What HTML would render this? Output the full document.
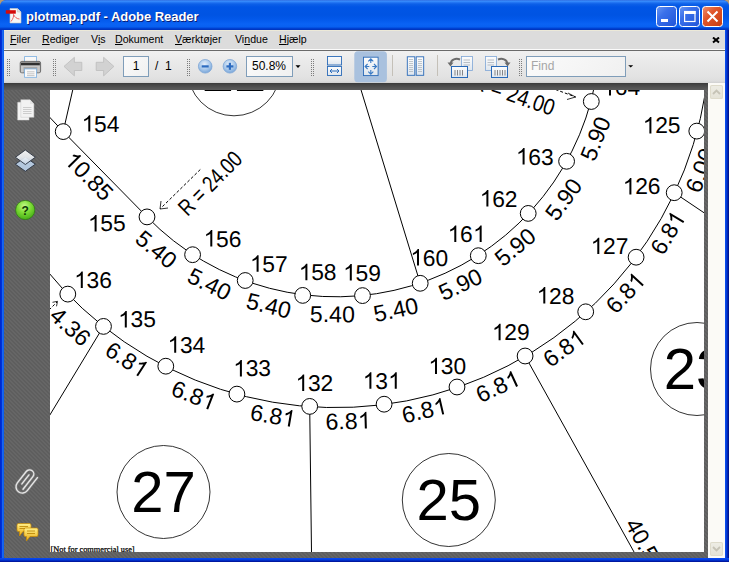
<!DOCTYPE html>
<html><head><meta charset="utf-8">
<style>
html,body{margin:0;padding:0;}
body{width:729px;height:562px;overflow:hidden;position:relative;background:#0a4fd8;font-family:"Liberation Sans",sans-serif;}
.abs{position:absolute;}
#title{left:0;top:0;width:729px;height:30px;border-radius:6px 6px 0 0;
 background:linear-gradient(#2a5fd8 0px,#3d94ff 1px,#2a7cf6 2px,#0d60e8 4px,#0055e5 7px,#0054e3 15px,#0258ea 19px,#0a63f4 24px,#0860f0 27px,#0046d8 28px,#0030b8 30px);}
#corner{left:0;top:0;width:729px;height:8px;}
#ttxt{left:26px;top:10px;color:#fff;font-weight:bold;font-size:13px;letter-spacing:-0.04px;text-shadow:1px 1px 0 #0a1e78;white-space:nowrap;line-height:14px;}
#lb{left:0;top:30px;width:4px;height:532px;background:linear-gradient(90deg,#0026c8 0px,#0030d8 1.5px,#1a66f0 2.5px,#1060ee 3.5px,#3a5aa8 4px);}
#rb{left:725px;top:30px;width:4px;height:532px;background:linear-gradient(90deg,#0850f0 0px,#0846e6 1px,#0030c8 2px,#001490 3.5px,#001080 4px);}
#bb{left:0;top:558px;width:729px;height:4px;background:linear-gradient(#0848f0 0px,#0846ea 1px,#0038d8 2px,#0018a0 3.5px,#001490 4px);}
#menu{left:4px;top:30px;width:721px;height:20px;background:#dcdcdc;border-top:1px solid #ece9d8;border-bottom:1px solid #fbfbfb;box-sizing:border-box;}
#menu span{position:absolute;top:2px;font-size:10.6px;color:#000;line-height:13px;white-space:nowrap;}
#menu u{text-decoration:underline;text-underline-offset:1px;}
#tb{left:4px;top:50px;width:721px;height:33px;box-sizing:border-box;border-top:1px solid #6a6a6a;
 background:linear-gradient(#f0f0f0 0px,#eeeeee 4px,#e8e8e8 14px,#e2e2e2 26px,#dedede 30px,#d0d0d0 32px);}
.grip{position:absolute;width:4px;height:18px;background-image:radial-gradient(circle,#8c8c8c 0.7px,transparent 0.9px);background-size:2px 2px;}
.field{position:absolute;border:1px solid #7f9db9;background:linear-gradient(135deg,#fbfbfb,#f0f0f0);box-sizing:border-box;font-size:12px;line-height:18px;white-space:nowrap;}
#shadow{left:4px;top:83px;width:704px;height:7px;background:linear-gradient(#3a3a3a,#464646 2px,#545454 5px,#5c5c5c 7px);}
#nav{left:4px;top:90px;width:46px;height:468px;background:repeating-linear-gradient(45deg,#5e5e5e 0px,#5e5e5e 1.41px,#666666 1.41px,#666666 2.83px);}
#pgarea{left:50px;top:90px;width:658px;height:468px;background:repeating-linear-gradient(45deg,#5e5e5e 0px,#5e5e5e 1.41px,#666666 1.41px,#666666 2.83px);}
#page{left:50px;top:90px;width:654px;height:462px;background:#fff;overflow:hidden;}
#sb{left:708px;top:83px;width:17px;height:475px;background:#fbfaf6;}
.sbtn{position:absolute;left:2px;width:13px;height:14px;border-radius:2px;background:linear-gradient(#eeede5,#e4e2d6);box-shadow:inset 0 0 0 1px #dedbcb;}
</style></head><body>
<div id="title" class="abs"></div>
<svg class="abs" style="left:0;top:0" width="729" height="30">
 <path d="M0,0 H5 Q1,1 0,5 Z" fill="#b89a70"/>
 <path d="M729,0 H724 Q728,1 729,5 Z" fill="#b89a70"/>
 <!-- pdf icon -->
 <path d="M10,8.5 H17.5 L21,12 V23 H10 Z" fill="#f6f6f6" stroke="#c8c8c8" stroke-width="0.6"/>
 <path d="M17.5,8.5 V12 H21" fill="#e0e0e0" stroke="#b8b8b8" stroke-width="0.5"/>
 <rect x="5.8" y="10.2" width="10" height="3.5" fill="#d40a0a"/>
 <path d="M11,21.5 C13,19 14,16 13.5,14.5 C14.5,17 17,19 19.5,19" fill="none" stroke="#e84040" stroke-width="0.8"/>
 <!-- buttons -->
 <defs>
  <linearGradient id="bbg" x1="0" y1="0" x2="1" y2="1"><stop offset="0" stop-color="#6a98f4"/><stop offset="0.35" stop-color="#3a70ea"/><stop offset="1" stop-color="#2054d8"/></linearGradient>
  <linearGradient id="cbg" x1="0" y1="0" x2="1" y2="1"><stop offset="0" stop-color="#f09070"/><stop offset="0.4" stop-color="#e0552a"/><stop offset="1" stop-color="#c83c10"/></linearGradient>
 </defs>
 <g>
  <rect x="656.5" y="6.5" width="20" height="20" rx="3" fill="url(#bbg)" stroke="#fff" stroke-width="1"/>
  <rect x="661" y="19" width="7" height="3" fill="#fff"/>
  <rect x="679.5" y="6.5" width="20" height="20" rx="3" fill="url(#bbg)" stroke="#fff" stroke-width="1"/>
  <rect x="684.6" y="11.5" width="10.4" height="10" fill="none" stroke="#fff" stroke-width="1.2"/>
  <rect x="684" y="11" width="11.6" height="3" fill="#fff"/>
  <rect x="702.5" y="6.5" width="20" height="20" rx="3" fill="url(#cbg)" stroke="#fff" stroke-width="1"/>
  <path d="M707.5,11.5 L717.5,21.5 M717.5,11.5 L707.5,21.5" stroke="#fff" stroke-width="2"/>
 </g>
</svg>
<div id="ttxt" class="abs">plotmap.pdf - Adobe Reader</div>
<div id="lb" class="abs"></div><div id="rb" class="abs"></div><div id="bb" class="abs"></div>
<div id="menu" class="abs">
 <span style="left:6px"><u>F</u>iler</span>
 <span style="left:38px"><u>R</u>ediger</span>
 <span style="left:87px">V<u>i</u>s</span>
 <span style="left:111px"><u>D</u>okument</span>
 <span style="left:171px"><u>V</u>ærktøjer</span>
 <span style="left:231px">Vi<u>n</u>due</span>
 <span style="left:275px"><u>H</u>jælp</span>
 <svg style="position:absolute;left:708px;top:6px" width="8" height="7"><path d="M1,0.5 L7,5.5 M7,0.5 L1,5.5" stroke="#000" stroke-width="2"/></svg>
</div>
<div id="tb" class="abs">
 <div class="field" style="left:119px;top:5px;width:26px;height:21px;text-align:center;">1</div>
 <div style="position:absolute;left:151px;top:6px;font-size:12px;line-height:18px;">/ &nbsp;1</div>
 <div class="field" style="left:242px;top:5px;width:47px;height:21px;padding-left:5px;">50.8%</div>
 <div class="field" style="left:522px;top:5px;width:100px;height:21px;padding-left:4px;color:#a6a6a6;">Find</div>
 <svg style="position:absolute;left:0;top:-1px" width="721" height="33">
  <!-- printer -->
  <rect x="20.6" y="6.6" width="12" height="6.5" fill="#f8f8f8" stroke="#7aaee0" stroke-width="0.8"/>
  <rect x="16.2" y="11.4" width="20.4" height="11.4" rx="1.6" fill="#a8a8a8" stroke="#555" stroke-width="0.8"/>
  <rect x="17" y="12.8" width="18.8" height="2.6" fill="#303030"/>
  <rect x="17" y="15.6" width="18.8" height="1.2" fill="#d0d0d0"/>
  <rect x="17" y="16.8" width="2.5" height="5.5" fill="#c8c8c8"/>
  <rect x="33.3" y="16.8" width="2.5" height="5.5" fill="#c8c8c8"/>
  <rect x="20.6" y="18.9" width="12" height="8.4" fill="#fafafa" stroke="#7aaee0" stroke-width="0.8"/>
  <path d="M23,21.8 H30.5 M23,23.8 H30.5 M23,25.6 H30.5" stroke="#a0a0a0" stroke-width="0.6"/>
  <!-- back/forward -->
  <path d="M60,16.4 L70.4,7.3 V12.3 H77.8 V20.5 H70.4 V25.9 Z" fill="#d2d2d2" stroke="#bdbdbd" stroke-width="0.8"/>
  <path d="M109.9,16.4 L99.6,7.3 V12.3 H92.2 V20.5 H99.6 V25.9 Z" fill="#d2d2d2" stroke="#bdbdbd" stroke-width="0.8"/>
  <!-- zoom out/in -->
  <defs>
   <radialGradient id="zg" cx="0.45" cy="0.35" r="0.7"><stop offset="0" stop-color="#e6f0fb"/><stop offset="0.55" stop-color="#a9c8ea"/><stop offset="1" stop-color="#6f9fd6"/></radialGradient>
   <linearGradient id="pg" x1="0" y1="0" x2="0" y2="1"><stop offset="0" stop-color="#fdfdfd"/><stop offset="1" stop-color="#dfe6ee"/></linearGradient>
  </defs>
  <circle cx="201.2" cy="16.3" r="6.8" fill="url(#zg)" stroke="#7ea6d6" stroke-width="0.8"/>
  <rect x="197.7" y="15.3" width="7" height="2.2" fill="#2d6cc0"/>
  <circle cx="225.9" cy="16.3" r="6.8" fill="url(#zg)" stroke="#7ea6d6" stroke-width="0.8"/>
  <rect x="222.4" y="15.3" width="7" height="2.2" fill="#2d6cc0"/>
  <rect x="224.8" y="12.8" width="2.2" height="7" fill="#2d6cc0"/>
  <path d="M291.5,15.3 H296.5 L294,18 Z" fill="#000"/>
  <path d="M624.2,15.3 H629.2 L626.7,17.6 Z" fill="#000"/>
  <!-- fit width -->
  <rect x="323.5" y="6.5" width="14" height="8.5" fill="url(#pg)" stroke="#2a6ab8" stroke-width="0.9"/>
  <rect x="323.5" y="16.5" width="14" height="9" fill="url(#pg)" stroke="#2a6ab8" stroke-width="0.9"/>
  <path d="M326,21 H335 M326,21 L328,19 M326,21 L328,23 M335,21 L333,19 M335,21 L333,23" stroke="#2a6ab8" stroke-width="1" fill="none"/>
  <!-- fit page selected -->
  <rect x="350.3" y="1.3" width="32.6" height="31" rx="3.5" fill="#a9c1de"/>
  <rect x="359.5" y="7.2" width="14.6" height="18.4" fill="url(#pg)" stroke="#2a6ab8" stroke-width="0.9"/>
  <path d="M366.8,9 V13 M364.3,11.3 L366.8,8.8 L369.3,11.3 M366.8,20 V24 M364.3,21.7 L366.8,24.2 L369.3,21.7 M361.3,16.5 H365.3 M363.6,14 L361.1,16.5 L363.6,19 M368.3,16.5 H372.3 M370,14 L372.5,16.5 L370,19" stroke="#3a7ac4" stroke-width="1.1" fill="none"/>
  <!-- separators -->
  <rect x="388" y="5" width="1" height="21" fill="#c4c0b8"/>
  <rect x="433" y="5" width="1" height="21" fill="#c4c0b8"/>
  <!-- two page -->
  <rect x="403.3" y="6.8" width="7.5" height="18.5" fill="url(#pg)" stroke="#2a6ab8" stroke-width="0.9"/>
  <rect x="412.2" y="6.8" width="7.5" height="18.5" fill="url(#pg)" stroke="#2a6ab8" stroke-width="0.9"/>
  <path d="M405,9.5 H409 M405,11.5 H409 M405,13.5 H409 M405,15.5 H409 M405,17.5 H409 M405,19.5 H409 M405,21.5 H409 M414,9.5 H418 M414,11.5 H418 M414,13.5 H418 M414,15.5 H418 M414,17.5 H418 M414,19.5 H418 M414,21.5 H418" stroke="#a8b0b8" stroke-width="0.7"/>
  <!-- rotate ccw -->
  <rect x="457.5" y="6.5" width="11" height="14" fill="url(#pg)" stroke="#7ea6d6" stroke-width="0.8"/>
  <path d="M459.5,10 H466 M459.5,12.5 H466 M459.5,15 H466" stroke="#a0a8b0" stroke-width="0.7"/>
  <path d="M456,9.5 C452,8 447,9 446.5,14" fill="none" stroke="#6c6c6c" stroke-width="2"/>
  <path d="M443.5,12.5 L449.5,12.5 L446.5,16.5 Z" fill="#6c6c6c"/>
  <rect x="447.5" y="16.5" width="16" height="11" fill="url(#pg)" stroke="#2a6ab8" stroke-width="1"/>
  <path d="M451,20 V25.5 M453.5,20 V25.5 M456,20 V25.5 M458.5,20 V25.5" stroke="#6a6a6a" stroke-width="0.8"/>
  <!-- rotate cw -->
  <rect x="481.5" y="6.5" width="11" height="14" fill="url(#pg)" stroke="#7ea6d6" stroke-width="0.8"/>
  <path d="M483.5,10 H490 M483.5,12.5 H490 M483.5,15 H490" stroke="#a0a8b0" stroke-width="0.7"/>
  <path d="M494,9.5 C498,8 503,9 503.5,14" fill="none" stroke="#6c6c6c" stroke-width="2"/>
  <path d="M500.5,12.5 L506.5,12.5 L503.5,16.5 Z" fill="#6c6c6c"/>
  <rect x="487.5" y="16.5" width="16" height="11" fill="url(#pg)" stroke="#2a6ab8" stroke-width="1"/>
  <path d="M491,20 V25.5 M493.5,20 V25.5 M496,20 V25.5 M498.5,20 V25.5 M501,20 V25.5" stroke="#6a6a6a" stroke-width="0.8"/>
 </svg>
</div>
<svg class="abs" style="left:0;top:0" width="729" height="90"><rect x="7" y="59" width="1" height="1" fill="#7c7c7c"/><rect x="7" y="61" width="1" height="1" fill="#7c7c7c"/><rect x="7" y="63" width="1" height="1" fill="#7c7c7c"/><rect x="7" y="65" width="1" height="1" fill="#7c7c7c"/><rect x="7" y="67" width="1" height="1" fill="#7c7c7c"/><rect x="7" y="69" width="1" height="1" fill="#7c7c7c"/><rect x="7" y="71" width="1" height="1" fill="#7c7c7c"/><rect x="7" y="73" width="1" height="1" fill="#7c7c7c"/><rect x="7" y="75" width="1" height="1" fill="#7c7c7c"/><rect x="9" y="59" width="1" height="1" fill="#7c7c7c"/><rect x="9" y="61" width="1" height="1" fill="#7c7c7c"/><rect x="9" y="63" width="1" height="1" fill="#7c7c7c"/><rect x="9" y="65" width="1" height="1" fill="#7c7c7c"/><rect x="9" y="67" width="1" height="1" fill="#7c7c7c"/><rect x="9" y="69" width="1" height="1" fill="#7c7c7c"/><rect x="9" y="71" width="1" height="1" fill="#7c7c7c"/><rect x="9" y="73" width="1" height="1" fill="#7c7c7c"/><rect x="9" y="75" width="1" height="1" fill="#7c7c7c"/><rect x="53" y="59" width="1" height="1" fill="#7c7c7c"/><rect x="53" y="61" width="1" height="1" fill="#7c7c7c"/><rect x="53" y="63" width="1" height="1" fill="#7c7c7c"/><rect x="53" y="65" width="1" height="1" fill="#7c7c7c"/><rect x="53" y="67" width="1" height="1" fill="#7c7c7c"/><rect x="53" y="69" width="1" height="1" fill="#7c7c7c"/><rect x="53" y="71" width="1" height="1" fill="#7c7c7c"/><rect x="53" y="73" width="1" height="1" fill="#7c7c7c"/><rect x="53" y="75" width="1" height="1" fill="#7c7c7c"/><rect x="55" y="59" width="1" height="1" fill="#7c7c7c"/><rect x="55" y="61" width="1" height="1" fill="#7c7c7c"/><rect x="55" y="63" width="1" height="1" fill="#7c7c7c"/><rect x="55" y="65" width="1" height="1" fill="#7c7c7c"/><rect x="55" y="67" width="1" height="1" fill="#7c7c7c"/><rect x="55" y="69" width="1" height="1" fill="#7c7c7c"/><rect x="55" y="71" width="1" height="1" fill="#7c7c7c"/><rect x="55" y="73" width="1" height="1" fill="#7c7c7c"/><rect x="55" y="75" width="1" height="1" fill="#7c7c7c"/><rect x="187" y="59" width="1" height="1" fill="#7c7c7c"/><rect x="187" y="61" width="1" height="1" fill="#7c7c7c"/><rect x="187" y="63" width="1" height="1" fill="#7c7c7c"/><rect x="187" y="65" width="1" height="1" fill="#7c7c7c"/><rect x="187" y="67" width="1" height="1" fill="#7c7c7c"/><rect x="187" y="69" width="1" height="1" fill="#7c7c7c"/><rect x="187" y="71" width="1" height="1" fill="#7c7c7c"/><rect x="187" y="73" width="1" height="1" fill="#7c7c7c"/><rect x="187" y="75" width="1" height="1" fill="#7c7c7c"/><rect x="189" y="59" width="1" height="1" fill="#7c7c7c"/><rect x="189" y="61" width="1" height="1" fill="#7c7c7c"/><rect x="189" y="63" width="1" height="1" fill="#7c7c7c"/><rect x="189" y="65" width="1" height="1" fill="#7c7c7c"/><rect x="189" y="67" width="1" height="1" fill="#7c7c7c"/><rect x="189" y="69" width="1" height="1" fill="#7c7c7c"/><rect x="189" y="71" width="1" height="1" fill="#7c7c7c"/><rect x="189" y="73" width="1" height="1" fill="#7c7c7c"/><rect x="189" y="75" width="1" height="1" fill="#7c7c7c"/><rect x="311" y="59" width="1" height="1" fill="#7c7c7c"/><rect x="311" y="61" width="1" height="1" fill="#7c7c7c"/><rect x="311" y="63" width="1" height="1" fill="#7c7c7c"/><rect x="311" y="65" width="1" height="1" fill="#7c7c7c"/><rect x="311" y="67" width="1" height="1" fill="#7c7c7c"/><rect x="311" y="69" width="1" height="1" fill="#7c7c7c"/><rect x="311" y="71" width="1" height="1" fill="#7c7c7c"/><rect x="311" y="73" width="1" height="1" fill="#7c7c7c"/><rect x="311" y="75" width="1" height="1" fill="#7c7c7c"/><rect x="313" y="59" width="1" height="1" fill="#7c7c7c"/><rect x="313" y="61" width="1" height="1" fill="#7c7c7c"/><rect x="313" y="63" width="1" height="1" fill="#7c7c7c"/><rect x="313" y="65" width="1" height="1" fill="#7c7c7c"/><rect x="313" y="67" width="1" height="1" fill="#7c7c7c"/><rect x="313" y="69" width="1" height="1" fill="#7c7c7c"/><rect x="313" y="71" width="1" height="1" fill="#7c7c7c"/><rect x="313" y="73" width="1" height="1" fill="#7c7c7c"/><rect x="313" y="75" width="1" height="1" fill="#7c7c7c"/><rect x="519" y="59" width="1" height="1" fill="#7c7c7c"/><rect x="519" y="61" width="1" height="1" fill="#7c7c7c"/><rect x="519" y="63" width="1" height="1" fill="#7c7c7c"/><rect x="519" y="65" width="1" height="1" fill="#7c7c7c"/><rect x="519" y="67" width="1" height="1" fill="#7c7c7c"/><rect x="519" y="69" width="1" height="1" fill="#7c7c7c"/><rect x="519" y="71" width="1" height="1" fill="#7c7c7c"/><rect x="519" y="73" width="1" height="1" fill="#7c7c7c"/><rect x="519" y="75" width="1" height="1" fill="#7c7c7c"/><rect x="521" y="59" width="1" height="1" fill="#7c7c7c"/><rect x="521" y="61" width="1" height="1" fill="#7c7c7c"/><rect x="521" y="63" width="1" height="1" fill="#7c7c7c"/><rect x="521" y="65" width="1" height="1" fill="#7c7c7c"/><rect x="521" y="67" width="1" height="1" fill="#7c7c7c"/><rect x="521" y="69" width="1" height="1" fill="#7c7c7c"/><rect x="521" y="71" width="1" height="1" fill="#7c7c7c"/><rect x="521" y="73" width="1" height="1" fill="#7c7c7c"/><rect x="521" y="75" width="1" height="1" fill="#7c7c7c"/></svg>
<div id="shadow" class="abs"></div>
<div id="nav" class="abs"></div>
<div id="pgarea" class="abs"></div>
<div id="page" class="abs"></div>
<svg class="abs" style="left:0;top:0" width="729" height="562" font-family="Liberation Sans" text-rendering="geometricPrecision">
 <defs><clipPath id="pc"><rect x="50" y="90" width="654" height="462"/></clipPath></defs>
 <g clip-path="url(#pc)">
<path d="M146.98,216.92 A263.8,263.8 0 0 0 595.05,83.34" fill="none" stroke="#000" stroke-width="1"/>
<path d="M45.45,268.97 A374.0,374.0 0 0 0 705.50,92.11" fill="none" stroke="#000" stroke-width="1"/>
<line x1="75.00" y1="80.00" x2="63.20" y2="131.60" stroke="#000" stroke-width="1.0" />
<line x1="40.00" y1="107.00" x2="63.20" y2="131.60" stroke="#000" stroke-width="1.0" />
<line x1="63.20" y1="131.60" x2="147.00" y2="216.90" stroke="#000" stroke-width="1.0" />
<line x1="358.00" y1="80.00" x2="420.20" y2="283.30" stroke="#000" stroke-width="1.0" />
<line x1="309.70" y1="406.40" x2="311.60" y2="560.00" stroke="#000" stroke-width="1.0" />
<line x1="525.10" y1="356.00" x2="638.50" y2="560.00" stroke="#000" stroke-width="1.0" />
<line x1="674.20" y1="192.70" x2="720.00" y2="223.50" stroke="#000" stroke-width="1.0" />
<line x1="103.50" y1="326.40" x2="45.00" y2="423.00" stroke="#000" stroke-width="1.0" />
<circle cx="234.0" cy="69.3" r="46.5" fill="none" stroke="#000" stroke-width="0.8"/>
<text x="234.0" y="91.2" text-anchor="middle" font-size="58">22</text>
<circle cx="163.5" cy="492.0" r="46.5" fill="none" stroke="#000" stroke-width="0.8"/>
<text x="163.5" y="511.9" text-anchor="middle" font-size="58">27</text>
<circle cx="448.8" cy="500.0" r="46.5" fill="none" stroke="#000" stroke-width="0.8"/>
<text x="448.8" y="519.9" text-anchor="middle" font-size="58">25</text>
<circle cx="697.0" cy="369.0" r="46.5" fill="none" stroke="#000" stroke-width="0.8"/>
<text x="696.0" y="388.9" text-anchor="middle" font-size="58">23</text>
<circle cx="147.0" cy="216.9" r="7.9" fill="#fff" stroke="#000" stroke-width="1"/>
<circle cx="192.6" cy="254.7" r="7.9" fill="#fff" stroke="#000" stroke-width="1"/>
<circle cx="245.2" cy="280.5" r="7.9" fill="#fff" stroke="#000" stroke-width="1"/>
<circle cx="302.7" cy="295.4" r="7.9" fill="#fff" stroke="#000" stroke-width="1"/>
<circle cx="362.5" cy="295.6" r="7.9" fill="#fff" stroke="#000" stroke-width="1"/>
<circle cx="420.2" cy="283.3" r="7.9" fill="#fff" stroke="#000" stroke-width="1"/>
<circle cx="478.3" cy="255.7" r="7.9" fill="#fff" stroke="#000" stroke-width="1"/>
<circle cx="528.2" cy="213.4" r="7.9" fill="#fff" stroke="#000" stroke-width="1"/>
<circle cx="566.6" cy="161.3" r="7.9" fill="#fff" stroke="#000" stroke-width="1"/>
<circle cx="591.3" cy="101.5" r="7.9" fill="#fff" stroke="#000" stroke-width="1"/>
<circle cx="67.8" cy="294.1" r="7.9" fill="#fff" stroke="#000" stroke-width="1"/>
<circle cx="103.5" cy="326.40000000000003" r="7.9" fill="#fff" stroke="#000" stroke-width="1"/>
<circle cx="165.8" cy="366.20000000000005" r="7.9" fill="#fff" stroke="#000" stroke-width="1"/>
<circle cx="236.9" cy="394.1" r="7.9" fill="#fff" stroke="#000" stroke-width="1"/>
<circle cx="309.7" cy="406.40000000000003" r="7.9" fill="#fff" stroke="#000" stroke-width="1"/>
<circle cx="384.1" cy="404.20000000000005" r="7.9" fill="#fff" stroke="#000" stroke-width="1"/>
<circle cx="457.0" cy="387.0" r="7.9" fill="#fff" stroke="#000" stroke-width="1"/>
<circle cx="525.1" cy="356.0" r="7.9" fill="#fff" stroke="#000" stroke-width="1"/>
<circle cx="585.7" cy="311.8" r="7.9" fill="#fff" stroke="#000" stroke-width="1"/>
<circle cx="636.1" cy="257.20000000000005" r="7.9" fill="#fff" stroke="#000" stroke-width="1"/>
<circle cx="674.2" cy="192.7" r="7.9" fill="#fff" stroke="#000" stroke-width="1"/>
<circle cx="696.8" cy="131.1" r="7.9" fill="#fff" stroke="#000" stroke-width="1"/>
<circle cx="63.2" cy="131.6" r="7.9" fill="#fff" stroke="#000" stroke-width="1"/>
<g transform="translate(81.36,131.60)"><path transform="translate(0.00,0) scale(0.01113,-0.01113)" d="M803,0 L623,0 L623,1147 C580,1106 523,1065 453,1024 C383,983 320,952 254,931 L254,1105 C365,1152 452,1210 528,1278 C604,1346 658,1412 689,1476 L803,1476 Z"/><text x="12.68" y="0" font-size="22.8">54</text></g>
<g transform="translate(87.66,231.40)"><path transform="translate(0.00,0) scale(0.01113,-0.01113)" d="M803,0 L623,0 L623,1147 C580,1106 523,1065 453,1024 C383,983 320,952 254,931 L254,1105 C365,1152 452,1210 528,1278 C604,1346 658,1412 689,1476 L803,1476 Z"/><text x="12.68" y="0" font-size="22.8">55</text></g>
<g transform="translate(203.36,246.50)"><path transform="translate(0.00,0) scale(0.01113,-0.01113)" d="M803,0 L623,0 L623,1147 C580,1106 523,1065 453,1024 C383,983 320,952 254,931 L254,1105 C365,1152 452,1210 528,1278 C604,1346 658,1412 689,1476 L803,1476 Z"/><text x="12.68" y="0" font-size="22.8">56</text></g>
<g transform="translate(249.66,271.70)"><path transform="translate(0.00,0) scale(0.01113,-0.01113)" d="M803,0 L623,0 L623,1147 C580,1106 523,1065 453,1024 C383,983 320,952 254,931 L254,1105 C365,1152 452,1210 528,1278 C604,1346 658,1412 689,1476 L803,1476 Z"/><text x="12.68" y="0" font-size="22.8">57</text></g>
<g transform="translate(298.46,280.30)"><path transform="translate(0.00,0) scale(0.01113,-0.01113)" d="M803,0 L623,0 L623,1147 C580,1106 523,1065 453,1024 C383,983 320,952 254,931 L254,1105 C365,1152 452,1210 528,1278 C604,1346 658,1412 689,1476 L803,1476 Z"/><text x="12.68" y="0" font-size="22.8">58</text></g>
<g transform="translate(342.86,280.50)"><path transform="translate(0.00,0) scale(0.01113,-0.01113)" d="M803,0 L623,0 L623,1147 C580,1106 523,1065 453,1024 C383,983 320,952 254,931 L254,1105 C365,1152 452,1210 528,1278 C604,1346 658,1412 689,1476 L803,1476 Z"/><text x="12.68" y="0" font-size="22.8">59</text></g>
<g transform="translate(410.06,265.50)"><path transform="translate(0.00,0) scale(0.01113,-0.01113)" d="M803,0 L623,0 L623,1147 C580,1106 523,1065 453,1024 C383,983 320,952 254,931 L254,1105 C365,1152 452,1210 528,1278 C604,1346 658,1412 689,1476 L803,1476 Z"/><text x="12.68" y="0" font-size="22.8">60</text></g>
<g transform="translate(447.36,241.90)"><path transform="translate(0.00,0) scale(0.01113,-0.01113)" d="M803,0 L623,0 L623,1147 C580,1106 523,1065 453,1024 C383,983 320,952 254,931 L254,1105 C365,1152 452,1210 528,1278 C604,1346 658,1412 689,1476 L803,1476 Z"/><text x="12.68" y="0" font-size="22.8">6</text><path transform="translate(25.36,0) scale(0.01113,-0.01113)" d="M803,0 L623,0 L623,1147 C580,1106 523,1065 453,1024 C383,983 320,952 254,931 L254,1105 C365,1152 452,1210 528,1278 C604,1346 658,1412 689,1476 L803,1476 Z"/></g>
<g transform="translate(479.46,206.50)"><path transform="translate(0.00,0) scale(0.01113,-0.01113)" d="M803,0 L623,0 L623,1147 C580,1106 523,1065 453,1024 C383,983 320,952 254,931 L254,1105 C365,1152 452,1210 528,1278 C604,1346 658,1412 689,1476 L803,1476 Z"/><text x="12.68" y="0" font-size="22.8">62</text></g>
<g transform="translate(515.66,164.50)"><path transform="translate(0.00,0) scale(0.01113,-0.01113)" d="M803,0 L623,0 L623,1147 C580,1106 523,1065 453,1024 C383,983 320,952 254,931 L254,1105 C365,1152 452,1210 528,1278 C604,1346 658,1412 689,1476 L803,1476 Z"/><text x="12.68" y="0" font-size="22.8">63</text></g>
<g transform="translate(602.06,95.40)"><path transform="translate(0.00,0) scale(0.01113,-0.01113)" d="M803,0 L623,0 L623,1147 C580,1106 523,1065 453,1024 C383,983 320,952 254,931 L254,1105 C365,1152 452,1210 528,1278 C604,1346 658,1412 689,1476 L803,1476 Z"/><text x="12.68" y="0" font-size="22.8">64</text></g>
<g transform="translate(73.86,287.90)"><path transform="translate(0.00,0) scale(0.01113,-0.01113)" d="M803,0 L623,0 L623,1147 C580,1106 523,1065 453,1024 C383,983 320,952 254,931 L254,1105 C365,1152 452,1210 528,1278 C604,1346 658,1412 689,1476 L803,1476 Z"/><text x="12.68" y="0" font-size="22.8">36</text></g>
<g transform="translate(117.86,327.40)"><path transform="translate(0.00,0) scale(0.01113,-0.01113)" d="M803,0 L623,0 L623,1147 C580,1106 523,1065 453,1024 C383,983 320,952 254,931 L254,1105 C365,1152 452,1210 528,1278 C604,1346 658,1412 689,1476 L803,1476 Z"/><text x="12.68" y="0" font-size="22.8">35</text></g>
<g transform="translate(167.26,352.70)"><path transform="translate(0.00,0) scale(0.01113,-0.01113)" d="M803,0 L623,0 L623,1147 C580,1106 523,1065 453,1024 C383,983 320,952 254,931 L254,1105 C365,1152 452,1210 528,1278 C604,1346 658,1412 689,1476 L803,1476 Z"/><text x="12.68" y="0" font-size="22.8">34</text></g>
<g transform="translate(232.96,376.40)"><path transform="translate(0.00,0) scale(0.01113,-0.01113)" d="M803,0 L623,0 L623,1147 C580,1106 523,1065 453,1024 C383,983 320,952 254,931 L254,1105 C365,1152 452,1210 528,1278 C604,1346 658,1412 689,1476 L803,1476 Z"/><text x="12.68" y="0" font-size="22.8">33</text></g>
<g transform="translate(295.26,391.00)"><path transform="translate(0.00,0) scale(0.01113,-0.01113)" d="M803,0 L623,0 L623,1147 C580,1106 523,1065 453,1024 C383,983 320,952 254,931 L254,1105 C365,1152 452,1210 528,1278 C604,1346 658,1412 689,1476 L803,1476 Z"/><text x="12.68" y="0" font-size="22.8">32</text></g>
<g transform="translate(362.46,388.80)"><path transform="translate(0.00,0) scale(0.01113,-0.01113)" d="M803,0 L623,0 L623,1147 C580,1106 523,1065 453,1024 C383,983 320,952 254,931 L254,1105 C365,1152 452,1210 528,1278 C604,1346 658,1412 689,1476 L803,1476 Z"/><text x="12.68" y="0" font-size="22.8">3</text><path transform="translate(25.36,0) scale(0.01113,-0.01113)" d="M803,0 L623,0 L623,1147 C580,1106 523,1065 453,1024 C383,983 320,952 254,931 L254,1105 C365,1152 452,1210 528,1278 C604,1346 658,1412 689,1476 L803,1476 Z"/></g>
<g transform="translate(428.06,374.10)"><path transform="translate(0.00,0) scale(0.01113,-0.01113)" d="M803,0 L623,0 L623,1147 C580,1106 523,1065 453,1024 C383,983 320,952 254,931 L254,1105 C365,1152 452,1210 528,1278 C604,1346 658,1412 689,1476 L803,1476 Z"/><text x="12.68" y="0" font-size="22.8">30</text></g>
<g transform="translate(491.66,340.30)"><path transform="translate(0.00,0) scale(0.01113,-0.01113)" d="M803,0 L623,0 L623,1147 C580,1106 523,1065 453,1024 C383,983 320,952 254,931 L254,1105 C365,1152 452,1210 528,1278 C604,1346 658,1412 689,1476 L803,1476 Z"/><text x="12.68" y="0" font-size="22.8">29</text></g>
<g transform="translate(536.36,303.50)"><path transform="translate(0.00,0) scale(0.01113,-0.01113)" d="M803,0 L623,0 L623,1147 C580,1106 523,1065 453,1024 C383,983 320,952 254,931 L254,1105 C365,1152 452,1210 528,1278 C604,1346 658,1412 689,1476 L803,1476 Z"/><text x="12.68" y="0" font-size="22.8">28</text></g>
<g transform="translate(590.36,254.10)"><path transform="translate(0.00,0) scale(0.01113,-0.01113)" d="M803,0 L623,0 L623,1147 C580,1106 523,1065 453,1024 C383,983 320,952 254,931 L254,1105 C365,1152 452,1210 528,1278 C604,1346 658,1412 689,1476 L803,1476 Z"/><text x="12.68" y="0" font-size="22.8">27</text></g>
<g transform="translate(622.46,194.40)"><path transform="translate(0.00,0) scale(0.01113,-0.01113)" d="M803,0 L623,0 L623,1147 C580,1106 523,1065 453,1024 C383,983 320,952 254,931 L254,1105 C365,1152 452,1210 528,1278 C604,1346 658,1412 689,1476 L803,1476 Z"/><text x="12.68" y="0" font-size="22.8">26</text></g>
<g transform="translate(642.46,133.40)"><path transform="translate(0.00,0) scale(0.01113,-0.01113)" d="M803,0 L623,0 L623,1147 C580,1106 523,1065 453,1024 C383,983 320,952 254,931 L254,1105 C365,1152 452,1210 528,1278 C604,1346 658,1412 689,1476 L803,1476 Z"/><text x="12.68" y="0" font-size="22.8">25</text></g>
<g transform="translate(156.41,249.27) rotate(39.36) translate(-22.48,8.20)"><text x="0.00" y="0" font-size="23.1">5.40</text></g>
<g transform="translate(209.54,283.89) rotate(26.54) translate(-22.48,8.20)"><text x="0.00" y="0" font-size="23.1">5.40</text></g>
<g transform="translate(268.80,305.39) rotate(13.71) translate(-22.48,8.20)"><text x="0.00" y="0" font-size="23.1">5.40</text></g>
<g transform="translate(332.39,313.98) rotate(0.76) translate(-22.48,8.20)"><text x="0.00" y="0" font-size="23.1">5.40</text></g>
<g transform="translate(395.87,309.50) rotate(-12.16) translate(-22.48,8.20)"><text x="0.00" y="0" font-size="23.1">5.40</text></g>
<g transform="translate(460.36,284.19) rotate(-25.57) translate(-22.48,8.20)"><text x="0.00" y="0" font-size="23.1">5.90</text></g>
<g transform="translate(515.02,246.77) rotate(-39.68) translate(-22.48,8.20)"><text x="0.00" y="0" font-size="23.1">5.90</text></g>
<g transform="translate(563.50,199.27) rotate(-53.85) translate(-22.48,8.20)"><text x="0.00" y="0" font-size="23.1">5.90</text></g>
<g transform="translate(595.22,138.55) rotate(-67.94) translate(-22.48,8.20)"><text x="0.00" y="0" font-size="23.1">5.90</text></g>
<g transform="translate(700.12,170.29) rotate(-69.75) translate(-22.48,8.20)"><text x="0.00" y="0" font-size="23.1">6.00</text></g>
<g transform="translate(667.58,233.00) rotate(-58.97) translate(-22.48,8.20)"><text x="0.00" y="0" font-size="23.1">6.8</text><path transform="translate(32.11,0) scale(0.01128,-0.01128)" d="M803,0 L623,0 L623,1147 C580,1106 523,1065 453,1024 C383,983 320,952 254,931 L254,1105 C365,1152 452,1210 528,1278 C604,1346 658,1412 689,1476 L803,1476 Z"/></g>
<g transform="translate(625.11,292.97) rotate(-47.53) translate(-22.48,8.20)"><text x="0.00" y="0" font-size="23.1">6.8</text><path transform="translate(32.11,0) scale(0.01128,-0.01128)" d="M803,0 L623,0 L623,1147 C580,1106 523,1065 453,1024 C383,983 320,952 254,931 L254,1105 C365,1152 452,1210 528,1278 C604,1346 658,1412 689,1476 L803,1476 Z"/></g>
<g transform="translate(563.83,348.26) rotate(-36.09) translate(-22.48,8.20)"><text x="0.00" y="0" font-size="23.1">6.8</text><path transform="translate(32.11,0) scale(0.01128,-0.01128)" d="M803,0 L623,0 L623,1147 C580,1106 523,1065 453,1024 C383,983 320,952 254,931 L254,1105 C365,1152 452,1210 528,1278 C604,1346 658,1412 689,1476 L803,1476 Z"/></g>
<g transform="translate(497.59,386.40) rotate(-24.59) translate(-22.48,8.20)"><text x="0.00" y="0" font-size="23.1">6.8</text><path transform="translate(32.11,0) scale(0.01128,-0.01128)" d="M803,0 L623,0 L623,1147 C580,1106 523,1065 453,1024 C383,983 320,952 254,931 L254,1105 C365,1152 452,1210 528,1278 C604,1346 658,1412 689,1476 L803,1476 Z"/></g>
<g transform="translate(424.12,410.38) rotate(-13.11) translate(-22.48,8.20)"><text x="0.00" y="0" font-size="23.1">6.8</text><path transform="translate(32.11,0) scale(0.01128,-0.01128)" d="M803,0 L623,0 L623,1147 C580,1106 523,1065 453,1024 C383,983 320,952 254,931 L254,1105 C365,1152 452,1210 528,1278 C604,1346 658,1412 689,1476 L803,1476 Z"/></g>
<g transform="translate(347.95,420.84) rotate(-1.66) translate(-22.48,8.20)"><text x="0.00" y="0" font-size="23.1">6.8</text><path transform="translate(32.11,0) scale(0.01128,-0.01128)" d="M803,0 L623,0 L623,1147 C580,1106 523,1065 453,1024 C383,983 320,952 254,931 L254,1105 C365,1152 452,1210 528,1278 C604,1346 658,1412 689,1476 L803,1476 Z"/></g>
<g transform="translate(272.71,415.45) rotate(9.70) translate(-22.48,8.20)"><text x="0.00" y="0" font-size="23.1">6.8</text><path transform="translate(32.11,0) scale(0.01128,-0.01128)" d="M803,0 L623,0 L623,1147 C580,1106 523,1065 453,1024 C383,983 320,952 254,931 L254,1105 C365,1152 452,1210 528,1278 C604,1346 658,1412 689,1476 L803,1476 Z"/></g>
<g transform="translate(193.69,395.20) rotate(21.22) translate(-22.48,8.20)"><text x="0.00" y="0" font-size="23.1">6.8</text><path transform="translate(32.11,0) scale(0.01128,-0.01128)" d="M803,0 L623,0 L623,1147 C580,1106 523,1065 453,1024 C383,983 320,952 254,931 L254,1105 C365,1152 452,1210 528,1278 C604,1346 658,1412 689,1476 L803,1476 Z"/></g>
<g transform="translate(126.76,359.36) rotate(32.74) translate(-22.48,8.20)"><text x="0.00" y="0" font-size="23.1">6.8</text><path transform="translate(32.11,0) scale(0.01128,-0.01128)" d="M803,0 L623,0 L623,1147 C580,1106 523,1065 453,1024 C383,983 320,952 254,931 L254,1105 C365,1152 452,1210 528,1278 C604,1346 658,1412 689,1476 L803,1476 Z"/></g>
<g transform="translate(89.00,176.10) rotate(45.50) translate(-28.90,8.20)"><path transform="translate(0.00,0) scale(0.01128,-0.01128)" d="M803,0 L623,0 L623,1147 C580,1106 523,1065 453,1024 C383,983 320,952 254,931 L254,1105 C365,1152 452,1210 528,1278 C604,1346 658,1412 689,1476 L803,1476 Z"/><text x="12.85" y="0" font-size="23.1">0.85</text></g>
<text transform="translate(209.8,183.1) rotate(-45) scale(0.8,1)" y="8.09" text-anchor="middle" font-size="22.8">R = 24.00</text>
<g transform="translate(70.50,326.50) rotate(42.00) translate(-22.48,8.20)"><text x="0.00" y="0" font-size="23.1">4.36</text></g>
<text transform="translate(470.8,87.8) rotate(19.2) scale(0.86,1)" font-size="22.8">R = 24.00</text>
<text transform="translate(624.5,524) rotate(61)" font-size="22.8">40.58</text>
<g stroke="#000" stroke-width="1" fill="none" stroke-dasharray="3,2"><line x1="200.3" y1="169.5" x2="160.5" y2="208.5"/><line x1="555.5" y1="89.5" x2="575.6" y2="97"/><line x1="49" y1="310" x2="57" y2="302"/></g>
<g stroke="#000" stroke-width="0.8" fill="none"><path d="M161,201 L160,209 L168,208"/><path d="M568,93 L575.6,97 L567,99.5"/><path d="M52.5,302.3 L57.5,301.3 L56.5,306.3"/></g>
<text x="50.5" y="552" font-family="Liberation Serif" font-size="8.3" stroke="#000" stroke-width="0.25">[Not for commercial use]</text>
 </g>
</svg>
<svg class="abs" style="left:4px;top:90px" width="46" height="468">
 <defs>
  <linearGradient id="lyr" x1="0" y1="0" x2="0" y2="1"><stop offset="0" stop-color="#ffffff"/><stop offset="0.5" stop-color="#eef2f6"/><stop offset="1" stop-color="#c4d4e6"/></linearGradient>
  <radialGradient id="hg" cx="0.45" cy="0.3" r="0.75"><stop offset="0" stop-color="#c4f88a"/><stop offset="0.45" stop-color="#7edc36"/><stop offset="1" stop-color="#3ea812"/></radialGradient>
  <linearGradient id="yg" x1="0" y1="0" x2="0" y2="1"><stop offset="0" stop-color="#fff08a"/><stop offset="1" stop-color="#e8a810"/></linearGradient>
 </defs>
 <!-- pages -->
 <path d="M13.7,12.3 H25 V30 H13.7 Z" fill="#f4f4f4" stroke="#d8d8d8" stroke-width="0.5"/>
 <path d="M16.8,9.7 H26 L29.9,14 V27.3 H16.8 Z" fill="#f2f2f2" stroke="#c8c8c8" stroke-width="0.5"/>
 <path d="M26,9.7 V14 H29.9 Z" fill="#e4e4e4"/>
 <path d="M19,17.5 H27.5 M19,19.5 H27.5 M19,21.5 H27.5 M19,23.5 H27.5" stroke="#b4b4b4" stroke-width="0.6"/>
 <!-- layers -->
 <path d="M21.35,67 L31.3,74.2 L21.35,81.3 L11.4,74.2 Z" fill="#b4c8de" stroke="#2a3240" stroke-width="0.9"/>
 <path d="M21.35,60 L31.3,67.25 L21.35,74.5 L11.4,67.25 Z" fill="url(#lyr)" fill-opacity="0.9" stroke="#2a3240" stroke-width="0.9"/>
 <!-- help -->
 <circle cx="21.2" cy="120" r="9.6" fill="url(#hg)" stroke="#2c7a10" stroke-width="0.7"/>
 <text x="21.2" y="124.5" text-anchor="middle" font-family="Liberation Sans" font-weight="bold" font-size="12" fill="#0e3a06">?</text>
 <!-- paperclip -->
 <g transform="rotate(-52 25.5 391)" fill="none" stroke-linecap="round">
  <path d="M15,391 H31 A4.2,4.2 0 0 0 31,382.6 H16.5 A6.3,6.3 0 0 0 16.5,395.2 H33 M18.5,386.8 H30" stroke="#7a7a7a" stroke-width="2.8"/>
  <path d="M15,391 H31 A4.2,4.2 0 0 0 31,382.6 H16.5 A6.3,6.3 0 0 0 16.5,395.2 H33 M18.5,386.8 H30" stroke="#e6e6e6" stroke-width="1.4"/>
 </g>
 <!-- comments -->
 <path d="M13,435 Q13,433.5 14.5,433.5 H25.5 Q27,433.5 27,435 V440 Q27,441.5 25.5,441.5 H19 L15.5,446 V441.5 H14.5 Q13,441.5 13,440 Z" fill="url(#yg)" stroke="#c88a00" stroke-width="0.7"/>
 <path d="M20,439.5 Q20,438 21.5,438 H32.5 Q34,438 34,439.5 V445 Q34,446.5 32.5,446.5 H26 L22.5,451 V446.5 H21.5 Q20,446.5 20,445 Z" fill="url(#yg)" stroke="#c88a00" stroke-width="0.7"/>
 <path d="M15.5,436.5 H24 M15.5,438.5 H21 M23,441 H31 M23,443.5 H31" stroke="#b88000" stroke-width="0.8"/>
</svg>
<div id="sb" class="abs">
 <div class="sbtn" style="top:2px"><svg width="13" height="14"><path d="M3,9 L6.5,5.5 L10,9" fill="none" stroke="#c6c3b6" stroke-width="1.8"/></svg></div>
 <div class="sbtn" style="top:459px"><svg width="13" height="14"><path d="M3,5 L6.5,8.5 L10,5" fill="none" stroke="#c6c3b6" stroke-width="1.8"/></svg></div>
</div>
</body></html>
